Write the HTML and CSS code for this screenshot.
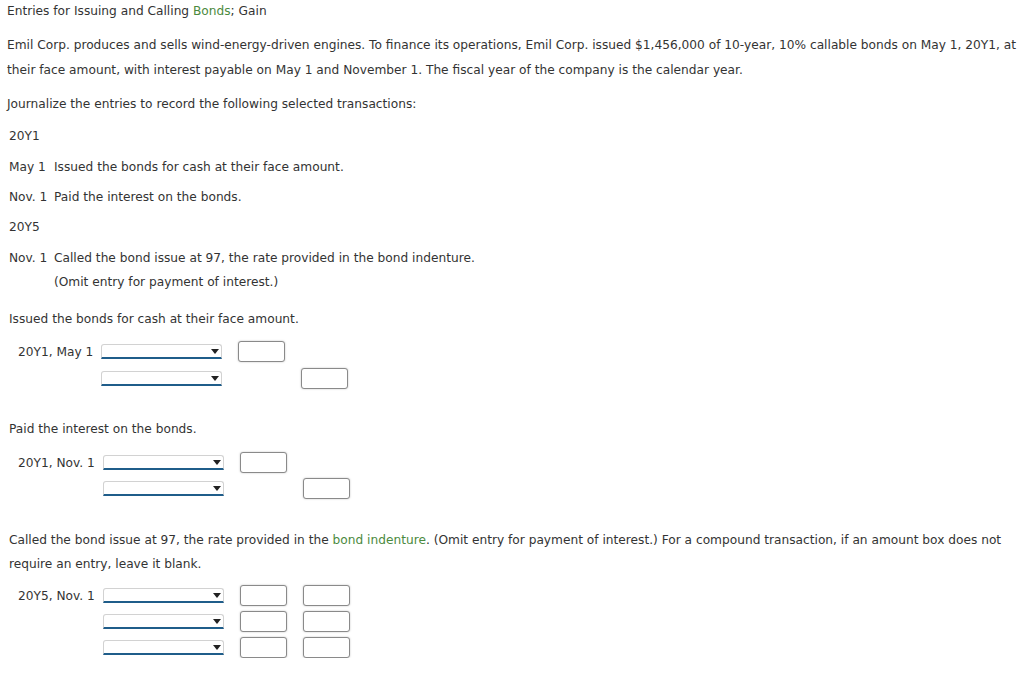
FILE: index.html
```html
<!DOCTYPE html>
<html>
<head>
<meta charset="utf-8">
<link rel="stylesheet" href="styles.css">
</head>
<body>
<div class="page">
  <p class="title">Entries for Issuing and Calling <span class="term">Bonds</span>; Gain</p>
  <p class="intro">Emil Corp. produces and sells wind-energy-driven engines. To finance its operations, Emil Corp. issued $1,456,000 of 10-year, 10% callable bonds on May 1, 20Y1, at their face amount, with interest payable on May 1 and November 1. The fiscal year of the company is the calendar year.</p>
  <p class="instr">Journalize the entries to record the following selected transactions:</p>

  <div class="trans">
    <div class="year">20Y1</div>
    <div class="trow"><span class="tdate">May 1</span><span class="tdesc">Issued the bonds for cash at their face amount.</span></div>
    <div class="trow"><span class="tdate">Nov. 1</span><span class="tdesc">Paid the interest on the bonds.</span></div>
    <div class="year">20Y5</div>
    <div class="trow"><span class="tdate">Nov. 1</span><span class="tdesc">Called the bond issue at 97, the rate provided in the bond indenture.<br>(Omit entry for payment of interest.)</span></div>
  </div>

  <p class="qlabel q1">Issued the bonds for cash at their face amount.</p>
  <div class="journal j1">
    <span class="jdate">20Y1, May 1</span>
    <span class="sel"><span class="arrow"></span></span>
    <input class="amt" type="text">
    <span class="blank"></span>
    <span class="jdate"></span>
    <span class="sel"><span class="arrow"></span></span>
    <span class="blank"></span>
    <input class="amt" type="text">
  </div>

  <p class="qlabel q2">Paid the interest on the bonds.</p>
  <div class="journal j2">
    <span class="jdate">20Y1, Nov. 1</span>
    <span class="sel"><span class="arrow"></span></span>
    <input class="amt" type="text">
    <span class="blank"></span>
    <span class="jdate"></span>
    <span class="sel"><span class="arrow"></span></span>
    <span class="blank"></span>
    <input class="amt" type="text">
  </div>

  <p class="qlabel q3">Called the bond issue at 97, the rate provided in the <span class="term">bond indenture</span>. (Omit entry for payment of interest.) For a compound transaction, if an amount box does not require an entry, leave it blank.</p>
  <div class="journal j3">
    <span class="jdate">20Y5, Nov. 1</span>
    <span class="sel"><span class="arrow"></span></span>
    <input class="amt" type="text">
    <input class="amt" type="text">
    <span class="jdate"></span>
    <span class="sel"><span class="arrow"></span></span>
    <input class="amt" type="text">
    <input class="amt" type="text">
    <span class="jdate"></span>
    <span class="sel"><span class="arrow"></span></span>
    <input class="amt" type="text">
    <input class="amt" type="text">
  </div>
</div>
</body>
</html>
```

FILE: styles.css
```css
html, body {
  margin: 0;
  padding: 0;
  background: #ffffff;
}
body {
  font-family: "DejaVu Sans", Verdana, sans-serif;
  font-size: 12.2px;
  color: #333333;
}
.page {
  padding: 1px 0 0 7px;
}
p {
  margin: 0;
}
.title {
  line-height: 20px;
}
.term {
  color: #4b8a3e;
}
.intro {
  margin-top: 12px;
  line-height: 25px;
}
.instr {
  margin-top: 11px;
  line-height: 20px;
}
.trans {
  margin-top: 12px;
  padding-left: 2px;
}
.year {
  line-height: 20px;
  margin-bottom: 11px;
}
.trow {
  display: flex;
  line-height: 20px;
  margin-bottom: 10px;
}
.trow:last-child {
  margin-bottom: 0;
}
.tdate {
  width: 45px;
  flex: none;
}
.tdesc {
  line-height: 24px;
  margin: -2px 0;
}
.qlabel {
  padding-left: 2px;
  line-height: 24px;
}
.q1 { margin-top: 15px; }
.q2 { margin-top: 28px; }
.q3 { margin-top: 29px; }
.journal {
  display: grid;
  grid-template-columns: auto 121px 47px 47px;
  justify-content: start;
  column-gap: 16px;
  row-gap: 6px;
  align-items: center;
  padding-left: 11px;
}
.j1 { margin-top: 10px; }
.j2 { margin-top: 11px; row-gap: 5px; }
.j3 { margin-top: 9px; row-gap: 5px; }
.jdate {
  margin-right: -8px;
  line-height: 20px;
  white-space: nowrap;
}
.sel {
  display: flex;
  justify-content: flex-end;
  align-items: center;
  box-sizing: border-box;
  height: 15px;
  width: 121px;
  border: 1px solid #d2d2d2;
  border-bottom: 2px solid #1f5d8a;
  border-radius: 3px 3px 0 0;
  padding-right: 2px;
  background: #ffffff;
}
.arrow {
  width: 0;
  height: 0;
  border-left: 4px solid transparent;
  border-right: 4px solid transparent;
  border-top: 5px solid #222222;
}
.amt {
  box-sizing: border-box;
  width: 47px;
  height: 21px;
  margin: 0;
  padding: 0;
  border: 1px solid #8a8a8a;
  border-radius: 3px;
  box-shadow: 0 0 2px rgba(0, 0, 0, 0.25);
  background: #ffffff;
}
.blank {
  width: 47px;
  height: 1px;
}
```
